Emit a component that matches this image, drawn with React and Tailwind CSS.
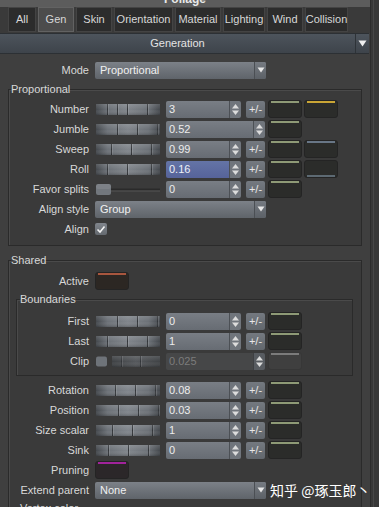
import React from 'react';

const tabs = [
  { name: 'All', w: 'w-[28px]' },
  { name: 'Gen', w: 'w-[36px]', active: true },
  { name: 'Skin', w: 'w-[36px]' },
  { name: 'Orientation', w: 'w-[59px]' },
  { name: 'Material', w: 'w-[46px]' },
  { name: 'Lighting', w: 'w-[42px]' },
  { name: 'Wind', w: 'w-[36px]' },
  { name: 'Collision', w: 'w-[43px]' },
];

const GREEN = 'bg-[#8e9a76]';

function Slider({ ticks, dim }) {
  const id = dim ? 'sl-dim' : 'sl';
  return (
    <svg width="64" height="11" className="ml-px shrink-0">
      <defs>
        <linearGradient id="sl" x1="0" x2="1" y1="0" y2="0">
          <stop offset="0" stopColor="#44484d" />
          <stop offset="0.18" stopColor="#6c7177" />
          <stop offset="0.5" stopColor="#80858b" />
          <stop offset="0.82" stopColor="#6c7177" />
          <stop offset="1" stopColor="#44484d" />
        </linearGradient>
        <linearGradient id="sl-dim" x1="0" x2="1" y1="0" y2="0">
          <stop offset="0" stopColor="#3f4245" />
          <stop offset="0.5" stopColor="#55585c" />
          <stop offset="1" stopColor="#404346" />
        </linearGradient>
        <linearGradient id="sl-v" x1="0" x2="0" y1="0" y2="1">
          <stop offset="0" stopColor="#ffffff" stopOpacity="0.12" />
          <stop offset="0.5" stopColor="#ffffff" stopOpacity="0" />
          <stop offset="1" stopColor="#000000" stopOpacity="0.2" />
        </linearGradient>
      </defs>
      {dim ? (
        <>
          <rect x="0" y="0.5" width="11" height="10" rx="2" fill="#6e7379" />
          <rect x="16" y="0" width="48" height="11" fill="url(#sl-dim)" />
        </>
      ) : (
        <rect x="0" y="0" width="64" height="11" fill={`url(#${id})`} />
      )}
      {ticks.map((t) => (
        <g key={t}>
          <rect x={t} y="0" width="1" height="11" fill="#33363a" />
          <rect x={t + 1} y="0" width="1" height="11" fill="#ffffff" opacity="0.12" />
        </g>
      ))}
      <rect x={dim ? 16 : 0} y="0" width={dim ? 48 : 64} height="11" fill="url(#sl-v)" />
    </svg>
  );
}

function KnobSlider() {
  return (
    <svg width="64" height="11" className="ml-px shrink-0">
      <rect x="14" y="4.5" width="50" height="2" fill="#2a2a2a" />
      <rect x="14" y="6.5" width="50" height="1" fill="#555" />
      <rect x="0" y="0" width="15" height="11" rx="2" fill="#72777d" />
      <rect x="0" y="0" width="15" height="5" rx="2" fill="#ffffff" opacity="0.08" />
    </svg>
  );
}

function Spinner({ dim }) {
  return (
    <div className={`flex w-[12px] items-center justify-center border-l ${dim ? 'border-[#3e4043] bg-[#585c61]' : 'border-[#4c5055] bg-[#70757c]'}`}>
      <svg width="9" height="15">
        <path d="M1 6.5 L8 6.5 L4.5 2 Z" fill="#dcdcdc" />
        <path d="M1 8.5 L8 8.5 L4.5 13 Z" fill="#dcdcdc" />
      </svg>
    </div>
  );
}

function Field({ value, wide, hl, dim }) {
  const bg = hl
    ? 'bg-gradient-to-b from-[#6474a6] to-[#56639a] text-[#eef0f8]'
    : dim
      ? 'bg-[#464748] text-[#7c7c7c]'
      : 'bg-gradient-to-b from-[#797e85] to-[#676c73] text-[#ececec]';
  return (
    <div className={`ml-[6px] flex h-[17px] shrink-0 overflow-hidden rounded-[2px] ${wide ? 'w-[99px]' : 'w-[75px]'}`}>
      <div className={`flex flex-1 items-center pl-[3px] ${bg}`}>{value}</div>
      <Spinner dim={dim} />
    </div>
  );
}

function PlusMinus() {
  return (
    <div className="ml-[5px] flex h-[17px] w-[19px] shrink-0 items-center justify-center rounded-[2px] bg-gradient-to-b from-[#747980] to-[#62676d] text-[11px] text-[#e6e6e6]">
      +/-
    </div>
  );
}

function Swatch({ line = GREEN, bottom, dim, bg = 'bg-[#2b2c2a]', ml = 'ml-[3px]' }) {
  return (
    <div className={`${ml} flex h-[18px] w-[34px] shrink-0 flex-col justify-between rounded-[3px] border ${dim ? 'border-[#373737] bg-[#3f3f3f]' : `border-[#242424] ${bg}`}`}>
      <div className={`mx-[2px] h-[2px] ${bottom ? 'bg-transparent' : line}`} />
      <div className={`mx-[2px] h-[2px] ${bottom ? line : 'bg-transparent'}`} />
    </div>
  );
}

function Row({ label, lw, children }) {
  return (
    <div className="flex h-[20px] items-center">
      <div className={`${lw} shrink-0 whitespace-nowrap text-right text-[#d8d8d8]`}>{label}</div>
      <div className="ml-[6px] flex items-center">{children}</div>
    </div>
  );
}

function NumRow({ label, lw, ticks, value, hl, noPm, sw2 }) {
  return (
    <Row label={label} lw={lw}>
      <Slider ticks={ticks} />
      <Field value={value} hl={hl} wide={noPm} />
      {!noPm && <PlusMinus />}
      <Swatch />
      {sw2}
    </Row>
  );
}

function Dropdown({ value }) {
  return (
    <div className="flex h-[17px] w-[171px] overflow-hidden rounded-[2px] bg-gradient-to-b from-[#7c8188] to-[#5f646a]">
      <div className="flex flex-1 items-center pl-[5px] text-[#f0f0f0]">{value}</div>
      <div className="flex w-[12px] items-center justify-center border-l border-[#4b4f54] bg-gradient-to-b from-[#757a81] to-[#5c6167]">
        <svg width="8" height="6">
          <path d="M0.5 0.5 L7.5 0.5 L4 5.5 Z" fill="#e6e6e6" />
        </svg>
      </div>
    </div>
  );
}

function Group({ title, className, children, legendMl = 'ml-[2px]' }) {
  return (
    <fieldset className={`min-w-0 border border-[#2a2a2a] bg-[#3a3a3a] px-0 shadow-[inset_1px_1px_0_#4a4a4a] ${className}`}>
      <legend className={`${legendMl} px-0 leading-[14px] text-[#d8d8d8]`}>{title}</legend>
      {children}
    </fieldset>
  );
}

export default function App() {
  return (
    <div className="relative flex h-[507px] w-[379px] items-start overflow-hidden bg-[#3f3f3f] font-['Liberation_Sans',Arial,sans-serif] text-[11px] leading-[13px]">
      <div className="w-[370px] shrink-0">
        {/* title strip, cut off by the window */}
        <div className="h-[7px] overflow-hidden bg-[#5c5c5c] text-center">
          <div className="-mt-[8px] text-[12px] font-bold leading-[14px] text-[#e8e8e8]">Foliage</div>
        </div>

        {/* tabs */}
        <div className="flex h-[26px] gap-[2px] bg-[#3a3a3a] pl-[8px]">
          {tabs.map((t) => (
            <div
              key={t.name}
              className={`flex h-[25px] items-center justify-center border text-[#d8d8d8] ${t.w} ${t.active ? 'border-[#626262] bg-[#4c4c4c]' : 'border-[#444] bg-[#2c2c2c]'}`}
            >
              {t.name}
            </div>
          ))}
        </div>

        {/* Generation header */}
        <div className="mr-px flex h-[21px] border-y border-[#2c3034] bg-gradient-to-b from-[#4d545c] to-[#3e444b]">
          <div className="flex flex-1 items-center justify-center text-[#e4e4e4]">Generation</div>
          <div className="flex w-[14px] items-center justify-center border-l border-[#2e3338]">
            <svg width="9" height="7">
              <path d="M0.5 0.5 L8.5 0.5 L4.5 6.5 Z" fill="#f0f0f0" />
            </svg>
          </div>
        </div>

        <div className="mt-[6px]">
          <Row label="Mode" lw="w-[89px]">
            <Dropdown value="Proportional" />
          </Row>
        </div>

        <Group title="Proportional" className="mx-[8px] mt-[2px] pb-[6px] pt-[3px]">
          <NumRow label="Number" lw="w-[80px]" ticks={[11, 21, 31, 51]} value="3"
            sw2={<Swatch ml="ml-[2px]" line="bg-[#c9a535]" />} />
          <NumRow label="Jumble" lw="w-[80px]" ticks={[21, 41, 61]} value="0.52" noPm />
          <NumRow label="Sweep" lw="w-[80px]" ticks={[15, 35, 55]} value="0.99"
            sw2={<Swatch ml="ml-[2px]" line="bg-[#687686]" />} />
          <NumRow label="Roll" lw="w-[80px]" ticks={[11, 31, 55]} value="0.16" hl
            sw2={<Swatch ml="ml-[2px]" line="bg-[#5d6a73]" bottom />} />
          <Row label="Favor splits" lw="w-[80px]">
            <KnobSlider />
            <Field value="0" />
            <PlusMinus />
            <Swatch />
          </Row>
          <Row label="Align style" lw="w-[80px]">
            <Dropdown value="Group" />
          </Row>
          <Row label="Align" lw="w-[80px]">
            <div className="flex h-[12px] w-[12px] items-center justify-center rounded-[2px] bg-gradient-to-b from-[#80858c] to-[#656a70]">
              <svg width="10" height="9">
                <path d="M1.5 4.5 L4 7 L8.5 1.5" fill="none" stroke="#f4f4f4" strokeWidth="1.6" />
              </svg>
            </div>
          </Row>
        </Group>

        <Group title="Shared" className="mx-[8px] mt-[7px] pt-[4px]">
          <Row label="Active" lw="w-[80px]">
            <Swatch ml="ml-0" line="bg-[#a8563e]" bg="bg-[#2c2723]" />
          </Row>

          <Group title="Boundaries" legendMl="ml-[3px]" className="ml-[7px] mr-[8px] mt-[1px] pb-[4px] pt-[5px]">
            <NumRow label="First" lw="w-[72px]" ticks={[21, 41, 61]} value="0" />
            <NumRow label="Last" lw="w-[72px]" ticks={[11, 31, 51]} value="1" />
            <Row label="Clip" lw="w-[72px]">
              <Slider ticks={[25, 44]} dim />
              <Field value="0.025" wide dim />
              <Swatch dim line="bg-[#7b7b7b]" />
            </Row>
          </Group>

          <div className="mt-[4px]">
            <NumRow label="Rotation" lw="w-[80px]" ticks={[19, 39, 59]} value="0.08" />
            <NumRow label="Position" lw="w-[80px]" ticks={[22, 42, 62]} value="0.03" />
            <NumRow label="Size scalar" lw="w-[80px]" ticks={[16, 36, 56]} value="1" />
            <NumRow label="Sink" lw="w-[80px]" ticks={[12, 32, 52]} value="0" />
            <Row label="Pruning" lw="w-[80px]">
              <Swatch ml="ml-0" line="bg-[#a1239b]" bg="bg-[#2b2729]" />
            </Row>
            <Row label="Extend parent" lw="w-[80px]">
              <Dropdown value="None" />
            </Row>
          </div>

          <Group title="Vertex color" legendMl="ml-[3px]" className="ml-[7px] mr-[8px] mt-[1px] h-[40px]" />
        </Group>
      </div>

      {/* right scrollbar strip */}
      <div className="flex h-full w-[9px] border-l border-[#2c2c2c] bg-[#383838]">
        <div className="ml-[2px] w-px bg-[#474747]" />
      </div>

      <div className="absolute left-[270px] top-[482px] font-['Noto_Sans_CJK_SC',sans-serif] text-[14px] leading-[16px] text-white">
        知乎 @琢玉郎丶
      </div>
    </div>
  );
}
